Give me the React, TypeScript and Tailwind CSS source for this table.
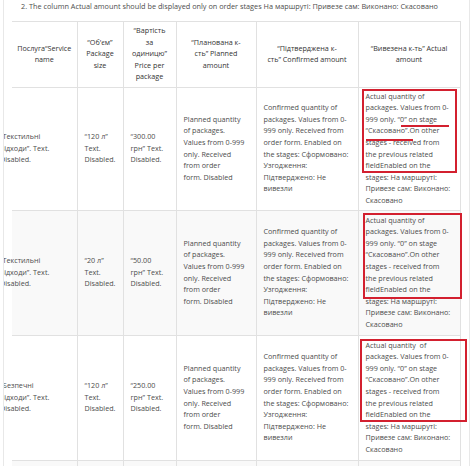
import React from "react";

type Row = {
  name: string[];
  size: string[];
  price: string[];
  planned: string[];
  confirmed: string[];
  actual: string[];
  bg: string;
  h: string;
  box: { l: number; t: number; w: number; h: number };
  underline?: boolean;
};

const planned = ["Planned quantity", "of packages.", "Values from 0-999", "only. Received", "from order", "form. Disabled"];
const confirmed = [
  "Confirmed quantity of",
  "packages. Values from 0-",
  "999 only. Received from",
  "order form. Enabled on",
  "the stages: Сформовано:",
  "Узгодження:",
  "Підтверджено: Не",
  "вивезли",
];
const actualRest = [
  "packages. Values from 0-",
  "999 only. “0” on stage",
  "“Скасовано”.On other",
  "stages - received from",
  "the previous related",
  "fieldEnabled on the",
  "stages: На маршруті:",
  "Привезе сам: Виконано:",
  "Скасовано",
];

const rows: Row[] = [
  { name: ["“Текстильні", "відходи”. Text.", "Disabled."], size: ["“120 л”", "Text.", "Disabled."], price: ["“300.00", "грн” Text.", "Disabled."], planned, confirmed, actual: ["Actual quantity of", ...actualRest], bg: "bg-white", h: "h-[122px]", box: { l: 3, t: 1, w: 95, h: 84 }, underline: true },
  { name: ["“Текстильні", "відходи”. Text.", "Disabled."], size: ["“20 л”", "Text.", "Disabled."], price: ["“50.00", "грн” Text.", "Disabled."], planned, confirmed, actual: ["Actual quantity of", ...actualRest], bg: "bg-[#f9f9f9]", h: "h-[125px]", box: { l: 4, t: 2, w: 99, h: 86 } },
  { name: ["“Безпечні", "відходи”. Text.", "Disabled."], size: ["“120 л”", "Text.", "Disabled."], price: ["“250.00", "грн” Text.", "Disabled."], planned, confirmed, actual: ["Actual quantity  of", ...actualRest], bg: "bg-white", h: "h-[125px]", box: { l: 1, t: 3, w: 107, h: 83 } },
  {
    name: ["Загальна сума"],
    size: [""],
    price: [""],
    planned: ["Value from 0-999.", "Sum of planned", "quantity of", "packages in all", "rows. Calculated", "automatically.", "Disabled"],
    confirmed: ["Sum of confirmed", "quantity"],
    actual: ["Sum of actual", "quantity"],
    bg: "bg-[#f9f9f9]",
    h: "h-[90px]",
    box: { l: 0, t: 0, w: 0, h: 0 },
  },
];

function Lines({ lines }: { lines: string[] }) {
  return (
    <>
      {lines.map((l, i) => (
        <span key={i} className="block whitespace-pre">
          {l}
        </span>
      ))}
    </>
  );
}

export default function App() {
  const font = { fontFamily: '"Open Sans", "Noto Sans", sans-serif' };
  const td = "border border-[#e1e1e1] align-middle px-[7px] py-[3px]";
  const th = "border border-[#e1e1e1] font-normal px-[2px] py-[2px] align-middle";
  return (
    <div className="w-[474px] h-[466px] overflow-hidden bg-white" style={font}>
      <div className="ml-[3px] w-[467px] h-[466px] border-x border-[#e8e8e8] overflow-hidden">
        <p className="pl-[17px] pt-[1px] text-[7.3px] leading-[11.6px] text-[#4d4d4d] whitespace-nowrap">
          2. The column Actual amount should be displayed only on order stages На маршруті: Привезе сам: Виконано: Скасовано
        </p>
        <div className="ml-[8px] mt-[8px]">
          <table className="table-fixed border-collapse w-[448px] text-[7.2px] leading-[11.6px] text-[#4d4d4d]">
            <colgroup>
              <col className="w-[65px]" />
              <col className="w-[46px]" />
              <col className="w-[53px]" />
              <col className="w-[80px]" />
              <col className="w-[102px]" />
              <col className="w-[102px]" />
            </colgroup>
            <thead>
              <tr className="h-[66px] text-[#333] text-center">
                <th className="border-y border-r border-[#e1e1e1] font-normal px-[2px] py-[2px] align-middle">
                  <Lines lines={["Послуга“Service", "name"]} />
                </th>
                <th className={th}>
                  <Lines lines={["“Об'єм”", "Package", "size"]} />
                </th>
                <th className={th}>
                  <Lines lines={["“Вартість", "за", "одиницю”", "Price per", "package"]} />
                </th>
                <th className={th}>
                  <Lines lines={["“Планована к-", "сть” Planned", "amount"]} />
                </th>
                <th className={th}>
                  <Lines lines={["“Підтверджена к-", "сть” Confirmed amount"]} />
                </th>
                <th className={th}>
                  <Lines lines={["“Вивезена к-ть” Actual", "amount"]} />
                </th>
              </tr>
            </thead>
            <tbody>
              {rows.map((r, i) => (
                <tr key={i} className={`${r.bg} ${r.h}`}>
                  <td className="border-y border-r border-[#e1e1e1] align-middle py-[3px] pr-[4px]">
                    <div className="ml-[-12px]">
                      <Lines lines={r.name} />
                    </div>
                  </td>
                  <td className={td}>
                    <Lines lines={r.size} />
                  </td>
                  <td className={td}>
                    <Lines lines={r.price} />
                  </td>
                  <td className={td}>
                    <Lines lines={r.planned} />
                  </td>
                  <td className={td}>
                    <Lines lines={r.confirmed} />
                  </td>
                  <td className={`${td} relative`}>
                    <Lines lines={r.actual} />
                    {r.box.w > 0 && (
                      <div
                        className="absolute border-2 border-[#d3202f] pointer-events-none"
                        style={{ left: r.box.l, top: r.box.t, width: r.box.w, height: r.box.h }}
                      />
                    )}
                    {r.underline && (
                      <>
                        <div className="absolute h-[2px] bg-[#d3202f] left-[42px] top-[37px] w-[48px]" />
                        <div className="absolute h-[2px] bg-[#d3202f] left-[7px] top-[51px] w-[47px]" />
                      </>
                    )}
                  </td>
                </tr>
              ))}
            </tbody>
          </table>
        </div>
      </div>
    </div>
  );
}
